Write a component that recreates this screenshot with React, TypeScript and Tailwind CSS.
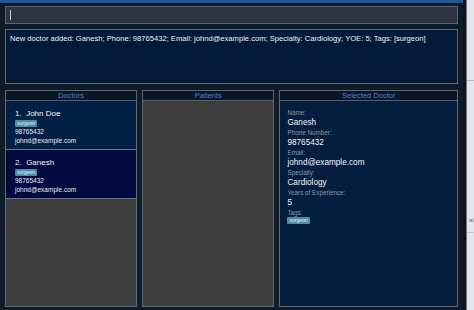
const doctors = [
  { name: 'John Doe', phone: '98765432', email: 'johnd@example.com', tags: ['surgeon'] },
  { name: 'Ganesh', phone: '98765432', email: 'johnd@example.com', tags: ['surgeon'] },
];

const details = [
  { label: 'Name:', value: 'Ganesh' },
  { label: 'Phone Number:', value: '98765432' },
  { label: 'Email:', value: 'johnd@example.com' },
  { label: 'Specialty:', value: 'Cardiology' },
  { label: 'Years of Experience:', value: '5' },
];

const Tag = ({ text }: { text: string }) => (
  <span className="inline-block bg-[#4b8ca6] text-[#e8f2f6] text-[5px] leading-[7px] px-[2px] rounded-[1px]">{text}</span>
);

const PanelHeader = ({ title }: { title: string }) => (
  <div className="h-[10px] bg-[#0c1725] border-b border-[#55606c] text-center text-[#4680d6] text-[7.5px] leading-[10px]">
    {title}
  </div>
);

export default function App() {
  return (
    <div
      className="w-[474px] h-[310px] flex bg-[#101b29] overflow-hidden text-white"
      style={{ fontFamily: '"Liberation Sans", Arial, sans-serif' }}
    >
      <div className="w-[463px] flex flex-col border-t-[3px] border-[#1d5a9c] px-[5px]">
        {/* command box */}
        <div className="mt-[3px] h-[18px] bg-[#2e3541] border border-[#5b6672] flex items-center px-[4px]">
          <div className="w-px h-[10px] bg-[#c9ced4]" />
        </div>

        {/* result display */}
        <div className="mt-[5px] h-[55px] bg-[#031a39] border border-[#5b6878] px-[4px] pt-[3px] text-[7.6px] leading-[11px] text-[#eef1f5]">
          New doctor added: Ganesh; Phone: 98765432; Email: johnd@example.com; Specialty: Cardiology; YOE: 5; Tags: [surgeon]
        </div>

        {/* panels */}
        <div className="mt-[6px] mb-[3px] flex-1 flex gap-[5px]">
          <div className="w-[134px] flex flex-col border border-[#5d6975] bg-[#3c3c3c]">
            <PanelHeader title="Doctors" />
            <div className="flex flex-col">
              {doctors.map((d, i) => (
                <div
                  key={i}
                  className={`h-[49px] pl-[9px] pt-[8px] border-b border-[#5f7a99] ${i === 1 ? 'bg-[#020a3f]' : 'bg-[#022045]'}`}
                >
                  <div className="text-[8px] leading-[10px] text-[#f0f2f5]">
                    {i + 1}.&nbsp; {d.name}
                  </div>
                  <div className="flex gap-[2px] h-[8px] items-center">
                    {d.tags.map((t) => (
                      <Tag key={t} text={t} />
                    ))}
                  </div>
                  <div className="text-[6.5px] leading-[9px] text-[#e8ebef]">{d.phone}</div>
                  <div className="text-[6.5px] leading-[9px] text-[#e8ebef]">{d.email}</div>
                </div>
              ))}
            </div>
          </div>

          <div className="w-[134px] flex flex-col border border-[#5d6975] bg-[#3c3c3c]">
            <PanelHeader title="Patients" />
          </div>

          <div className="w-[181px] flex flex-col border border-[#5d6975] bg-[#031e3e]">
            <PanelHeader title="Selected Doctor" />
            <div className="pl-[7px] pt-[8px] flex flex-col">
              {details.map((d) => (
                <div key={d.label} className="h-[20px]">
                  <div className="text-[6.3px] leading-[8px] text-[#8d96a3]">{d.label}</div>
                  <div className="text-[8.2px] leading-[11px] text-[#f2f4f7]">{d.value}</div>
                </div>
              ))}
              <div className="text-[6.3px] leading-[8px] text-[#8d96a3]">Tags:</div>
              <div className="flex">
                <Tag text="surgeon" />
              </div>
            </div>
          </div>
        </div>
      </div>

      {/* edge of the window behind */}
      <div className="w-[3px] bg-[#0b1420]" />
      <div className="w-px bg-[#6f7580]" />
      <div className="flex-1 bg-[#e3e5e8] flex flex-col">
        <div className="mt-[80px] h-px bg-[#b5b9bf]" />
        <div className="mt-[136px] text-[6px] leading-[7px] text-[#5b6c8a] pl-[2px]">ai</div>
        <div className="mt-[8px] h-px bg-[#c5c8cc]" />
      </div>
    </div>
  );
}
